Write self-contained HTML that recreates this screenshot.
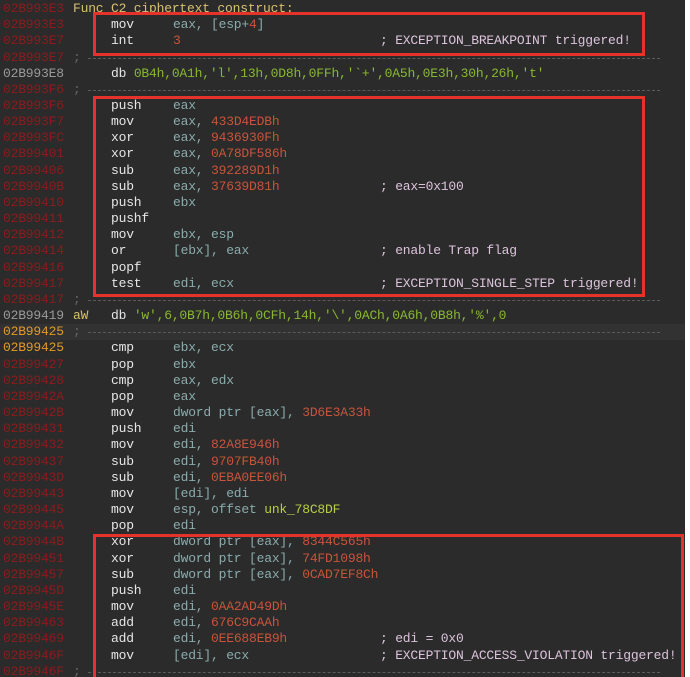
<!DOCTYPE html>
<html><head><meta charset="utf-8"><style>
html,body{margin:0;padding:0;background:#fff}
#c{position:relative;width:690px;height:677px;background:#2b2b2b;overflow:hidden;font-family:"Liberation Mono","DejaVu Sans Mono",monospace;font-size:13px;letter-spacing:-0.2px}
#c:after{content:"";position:absolute;right:0;top:0;width:5px;height:677px;background:#fff}
.r{position:absolute;left:0;height:16px;line-height:16px;white-space:pre;width:690px}
.a{position:absolute;left:3px;color:#8a1c1c}
.g{color:#9a9a9a}.o{color:#e09a2a}
.m{position:absolute;left:111px;color:#e6e6e6}
.p{position:absolute;left:173px;color:#8aacac}
.k{position:absolute;left:380px;color:#dcc4dc}
.n{color:#c8543a}.d{color:#88b830}.y{color:#d8c070}.w{color:#e6e6e6}
.sep{position:absolute;left:88px;width:572px;top:8px;border-top:1px dashed #5a5a5a}
.sc{position:absolute;left:73px;color:#666}
.box{position:absolute;border:3px solid #e3332a;box-sizing:border-box}
</style></head><body><div id="c">
<div class="r" style="top:1px"><span class="a">02B993E3</span><span class="y" style="position:absolute;left:73px">Func_C2_ciphertext_construct:</span></div>
<div class="r" style="top:17px"><span class="a">02B993E3</span><span class="m">mov</span><span class="p">eax, [esp+<span class="n">4</span>]</span></div>
<div class="r" style="top:33px"><span class="a">02B993E7</span><span class="m">int</span><span class="p"><span class="n">3</span></span><span class="k">; EXCEPTION_BREAKPOINT triggered!</span></div>
<div class="r" style="top:50px"><span class="a">02B993E7</span><span class="sc">;</span><div class="sep"></div></div>
<div class="r" style="top:66px"><span class="a g">02B993E8</span><span class="m">db <span class="d">0B4h,0A1h,'l',13h,0D8h,0FFh,'`+',0A5h,0E3h,30h,26h,'t'</span></span></div>
<div class="r" style="top:82px"><span class="a">02B993F6</span><span class="sc">;</span><div class="sep"></div></div>
<div class="r" style="top:98px"><span class="a">02B993F6</span><span class="m">push</span><span class="p">eax</span></div>
<div class="r" style="top:114px"><span class="a">02B993F7</span><span class="m">mov</span><span class="p">eax, <span class="n">433D4EDBh</span></span></div>
<div class="r" style="top:130px"><span class="a">02B993FC</span><span class="m">xor</span><span class="p">eax, <span class="n">9436930Fh</span></span></div>
<div class="r" style="top:146px"><span class="a">02B99401</span><span class="m">xor</span><span class="p">eax, <span class="n">0A78DF586h</span></span></div>
<div class="r" style="top:163px"><span class="a">02B99406</span><span class="m">sub</span><span class="p">eax, <span class="n">392289D1h</span></span></div>
<div class="r" style="top:179px"><span class="a">02B9940B</span><span class="m">sub</span><span class="p">eax, <span class="n">37639D81h</span></span><span class="k">; eax=0x100</span></div>
<div class="r" style="top:195px"><span class="a">02B99410</span><span class="m">push</span><span class="p">ebx</span></div>
<div class="r" style="top:211px"><span class="a">02B99411</span><span class="m">pushf</span></div>
<div class="r" style="top:227px"><span class="a">02B99412</span><span class="m">mov</span><span class="p">ebx, esp</span></div>
<div class="r" style="top:243px"><span class="a">02B99414</span><span class="m">or</span><span class="p">[ebx], eax</span><span class="k">; enable Trap flag</span></div>
<div class="r" style="top:260px"><span class="a">02B99416</span><span class="m">popf</span></div>
<div class="r" style="top:276px"><span class="a">02B99417</span><span class="m">test</span><span class="p">edi, ecx</span><span class="k">; EXCEPTION_SINGLE_STEP triggered!</span></div>
<div class="r" style="top:292px"><span class="a">02B99417</span><span class="sc">;</span><div class="sep"></div></div>
<div class="r" style="top:308px"><span class="a g">02B99419</span><span class="y" style="position:absolute;left:73px">aW</span><span class="m">db <span class="d">'w',6,0B7h,0B6h,0CFh,14h,'\',0ACh,0A6h,0B8h,'%',0</span></span></div>
<div class="r" style="top:324px;background:#323232"><span class="a o">02B99425</span><span class="sc">;</span><div class="sep"></div></div>
<div class="r" style="top:340px"><span class="a o">02B99425</span><span class="m">cmp</span><span class="p">ebx, ecx</span></div>
<div class="r" style="top:357px"><span class="a">02B99427</span><span class="m">pop</span><span class="p">ebx</span></div>
<div class="r" style="top:373px"><span class="a">02B99428</span><span class="m">cmp</span><span class="p">eax, edx</span></div>
<div class="r" style="top:389px"><span class="a">02B9942A</span><span class="m">pop</span><span class="p">eax</span></div>
<div class="r" style="top:405px"><span class="a">02B9942B</span><span class="m">mov</span><span class="p">dword ptr [eax], <span class="n">3D6E3A33h</span></span></div>
<div class="r" style="top:421px"><span class="a">02B99431</span><span class="m">push</span><span class="p">edi</span></div>
<div class="r" style="top:437px"><span class="a">02B99432</span><span class="m">mov</span><span class="p">edi, <span class="n">82A8E946h</span></span></div>
<div class="r" style="top:454px"><span class="a">02B99437</span><span class="m">sub</span><span class="p">edi, <span class="n">9707FB40h</span></span></div>
<div class="r" style="top:470px"><span class="a">02B9943D</span><span class="m">sub</span><span class="p">edi, <span class="n">0EBA0EE06h</span></span></div>
<div class="r" style="top:486px"><span class="a">02B99443</span><span class="m">mov</span><span class="p">[edi], edi</span></div>
<div class="r" style="top:502px"><span class="a">02B99445</span><span class="m">mov</span><span class="p">esp, offset <span style="color:#b8d040">unk_78C8DF</span></span></div>
<div class="r" style="top:518px"><span class="a">02B9944A</span><span class="m">pop</span><span class="p">edi</span></div>
<div class="r" style="top:534px"><span class="a">02B9944B</span><span class="m">xor</span><span class="p">dword ptr [eax], <span class="n">8344C565h</span></span></div>
<div class="r" style="top:551px"><span class="a">02B99451</span><span class="m">xor</span><span class="p">dword ptr [eax], <span class="n">74FD1098h</span></span></div>
<div class="r" style="top:567px"><span class="a">02B99457</span><span class="m">sub</span><span class="p">dword ptr [eax], <span class="n">0CAD7EF8Ch</span></span></div>
<div class="r" style="top:583px"><span class="a">02B9945D</span><span class="m">push</span><span class="p">edi</span></div>
<div class="r" style="top:599px"><span class="a">02B9945E</span><span class="m">mov</span><span class="p">edi, <span class="n">0AA2AD49Dh</span></span></div>
<div class="r" style="top:615px"><span class="a">02B99463</span><span class="m">add</span><span class="p">edi, <span class="n">676C9CAAh</span></span></div>
<div class="r" style="top:631px"><span class="a">02B99469</span><span class="m">add</span><span class="p">edi, <span class="n">0EE688EB9h</span></span><span class="k">; edi = 0x0</span></div>
<div class="r" style="top:648px"><span class="a">02B9946F</span><span class="m">mov</span><span class="p">[edi], ecx</span><span class="k">; EXCEPTION_ACCESS_VIOLATION triggered!</span></div>
<div class="r" style="top:664px"><span class="a">02B9946F</span><span class="sc">;</span><div class="sep"></div></div>
<div class="box" style="left:93px;top:12px;width:552px;height:44px"></div>
<div class="box" style="left:93px;top:96px;width:552px;height:201px"></div>
<div class="box" style="left:93px;top:534px;width:591px;height:150px"></div>
</div></body></html>
